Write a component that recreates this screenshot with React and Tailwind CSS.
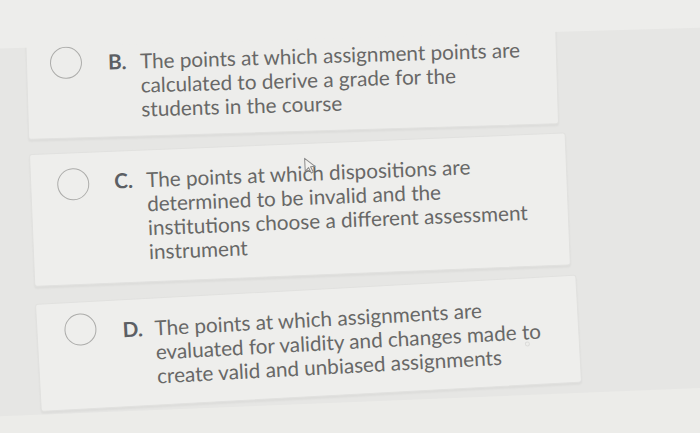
export default function App() {
  const font = { fontFamily: 'Lato, "Open Sans", sans-serif' };
  const Circle = () => (
    <div className="shrink-0 w-[32px] h-[32px] rounded-full border-[1.5px] border-[#acacaa]" />
  );
  const Label = ({ children }) => (
    <span className="w-[32px] shrink-0 font-bold text-[#5c5f64]">{children}</span>
  );
  const card = "rounded-[3px] border border-[#e1e1df] shadow-[0_2px_2px_rgba(0,0,0,0.04)] origin-top-left flex items-start";
  return (
    <div className="relative w-[700px] h-[433px] bg-[#e6e6e4] overflow-hidden" style={font}>
      {/* bottom lighter strip */}
      <div className="absolute left-[-20px] top-[417px] w-[760px] h-[80px] bg-[#ecece9] origin-top-left -rotate-[2.3deg]" />
      <div className="relative pt-[30px] flex flex-col items-start">
        {/* B */}
        <div className={`${card} ml-[25px] w-[531px] h-[110px] bg-[#ededeb] -rotate-[1.7deg] pl-[23px] pt-[17px]`}>
          <Circle />
          <div className="ml-[26px] mt-[4px] flex text-[20.7px] leading-[24px] text-[#686867]">
            <Label>B.</Label>
            <span className="whitespace-nowrap">The points at which assignment points are<br />calculated to derive a grade for the<br />students in the course</span>
          </div>
        </div>
        {/* C */}
        <div className={`${card} ml-[29px] mt-[14px] w-[537px] h-[133px] bg-[#eeeeec] -rotate-[2.3deg] pl-[26px] pt-[15px]`}>
          <Circle />
          <div className="ml-[25px] mt-[2px] flex text-[20.7px] leading-[24px] text-[#686867]">
            <Label>C.</Label>
            <span className="whitespace-nowrap">The points at which dispositions are<br />determined to be invalid and the<br />institutions choose a different assessment<br />instrument</span>
          </div>
        </div>
        {/* D */}
        <div className={`${card} relative ml-[35px] mt-[17px] w-[542px] h-[108px] bg-[#eeeeec] -rotate-[3.1deg] pl-[27px] pt-[11px]`}>
          <Circle />
          <div className="ml-[26px] mt-[6px] flex text-[20.7px] leading-[24px] text-[#686867]">
            <Label>D.</Label>
            <span className="whitespace-nowrap">The points at which assignments are<br />evaluated for validity and changes made to<br />create valid and unbiased assignments</span>
          </div>
          <div className="absolute left-[486px] top-[63px] w-[5px] h-[5px] rounded-full border border-[#dcdcda]" />
        </div>
      </div>
      {/* upper light area, covering the top edge of card B */}
      <div className="absolute left-[-20px] top-[-31px] w-[760px] h-[80px] bg-[#ededeb] origin-bottom-left -rotate-[1.7deg]" />
      {/* mouse cursor */}
      <svg className="absolute left-[304px] top-[157px]" width="14" height="18" viewBox="0 0 14 18">
        <path d="M1 1 L1 14 L4.5 10.5 L7 16 L9 15 L6.5 9.8 L11 9.5 Z" fill="#f2f2f0" stroke="#8a8a8a" strokeWidth="1" strokeLinejoin="round" transform="rotate(-3 7 9)" />
      </svg>
    </div>
  );
}
